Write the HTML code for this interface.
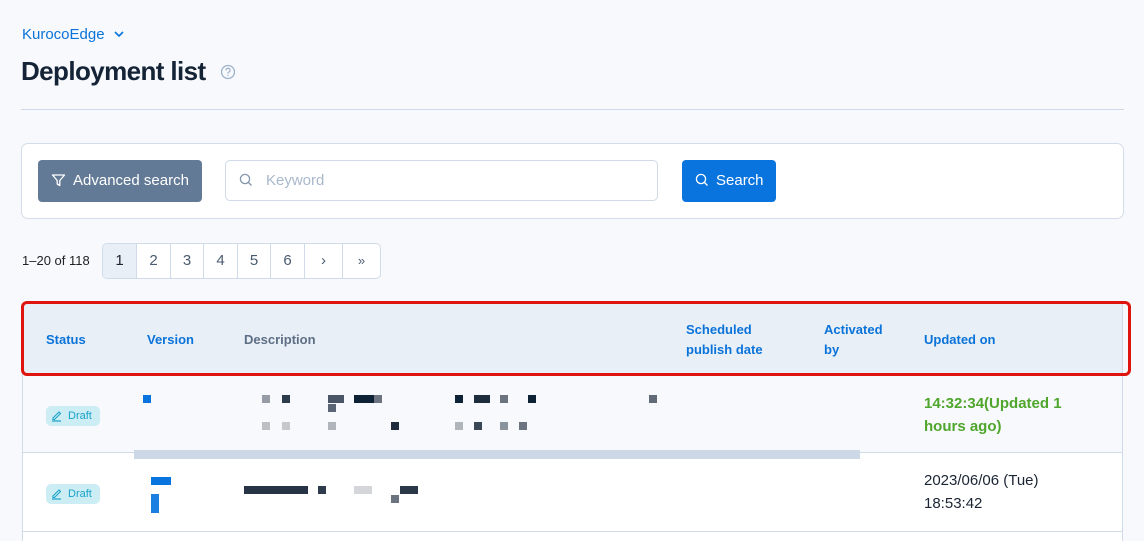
<!DOCTYPE html><html><head><style>
*{box-sizing:border-box;margin:0;padding:0}
body{width:1144px;height:541px;overflow:hidden;background:#f7f9fc;font-family:"Liberation Sans",sans-serif;position:relative;color:#1a2433}
.a{position:absolute}
.px{position:absolute;width:8px;height:8px}
</style></head><body>
<div class="a" style="left:22px;top:26px;font-size:15px;color:#0a73d9">KurocoEdge <svg width="12" height="10" viewBox="0 0 12 10" style="margin-left:4px"><path d="M2 3l4 4 4-4" stroke="#0a73d9" stroke-width="1.6" fill="none"/></svg></div>
<div class="a" style="left:21px;top:56px;font-size:26px;font-weight:bold;color:#142336;letter-spacing:-0.6px">Deployment list</div>
<svg class="a" style="left:220px;top:64px" width="16" height="16" viewBox="0 0 16 16"><circle cx="8" cy="8" r="6.5" fill="none" stroke="#9fb2cb" stroke-width="1.3"/><path d="M6 6.3a2 2 0 1 1 2.6 1.9c-.5.2-.6.5-.6 1v.4" fill="none" stroke="#9fb2cb" stroke-width="1.2"/><circle cx="8" cy="11.3" r=".7" fill="#9fb2cb"/></svg>
<div class="a" style="left:21px;top:109px;width:1103px;height:1px;background:#cdd9e6"></div>
<div class="a" style="left:21px;top:143px;width:1103px;height:76px;background:#fff;border:1px solid #d3dde9;border-radius:7px"></div>
<div class="a" style="left:38px;top:160px;width:164px;height:42px;background:#627a96;border-radius:4px;color:#fff;font-size:15px;line-height:42px;padding-left:35px">Advanced search</div>
<svg class="a" style="left:51px;top:173px" width="15" height="15" viewBox="0 0 15 15"><path d="M1.5 2h12l-4.7 5.5v5l-2.6-1.5v-3.5z" fill="none" stroke="#fff" stroke-width="1.3" stroke-linejoin="round"/></svg>
<div class="a" style="left:225px;top:160px;width:433px;height:41px;background:#fff;border:1px solid #cfdbe8;border-radius:5px;color:#a9b8cb;font-size:15px;line-height:39px;padding-left:40px">Keyword</div>
<svg class="a" style="left:239px;top:173px" width="14" height="14" viewBox="0 0 14 14"><circle cx="6" cy="6" r="4.6" fill="none" stroke="#8597ad" stroke-width="1.3"/><path d="M9.5 9.5l3 3" stroke="#8597ad" stroke-width="1.3"/></svg>
<div class="a" style="left:682px;top:160px;width:94px;height:42px;background:#0a74de;border-radius:4px;color:#fff;font-size:15px;line-height:42px;padding-left:34px">Search</div>
<svg class="a" style="left:695px;top:173px" width="14" height="14" viewBox="0 0 14 14"><circle cx="6" cy="6" r="4.6" fill="none" stroke="#fff" stroke-width="1.3"/><path d="M9.5 9.5l3 3" stroke="#fff" stroke-width="1.3"/></svg>
<div class="a" style="left:22px;top:253px;font-size:13px;color:#222">1–20 of 118</div>
<div class="a" style="left:102px;top:243px;height:36px;display:flex;border:1px solid #cfdbe8;border-radius:5px;background:#fff;overflow:hidden;font-size:15px;color:#4a5b70">
<div style="width:33px;line-height:34px;text-align:center;background:#e9eff7;color:#223">1</div>
<div style="width:34px;line-height:34px;text-align:center;border-left:1px solid #cfdbe8">2</div>
<div style="width:33px;line-height:34px;text-align:center;border-left:1px solid #cfdbe8">3</div>
<div style="width:34px;line-height:34px;text-align:center;border-left:1px solid #cfdbe8">4</div>
<div style="width:33px;line-height:34px;text-align:center;border-left:1px solid #cfdbe8">5</div>
<div style="width:34px;line-height:34px;text-align:center;border-left:1px solid #cfdbe8">6</div>
<div style="width:38px;line-height:34px;text-align:center;border-left:1px solid #cfdbe8">›</div>
<div style="width:38px;line-height:34px;text-align:center;border-left:1px solid #cfdbe8;font-size:13px">»</div>
</div>
<div class="a" style="left:22px;top:304px;width:1101px;height:237px;border-left:1px solid #cfdbe8;border-right:1px solid #cfdbe8;background:#fff"></div>
<div class="a" style="left:23px;top:304px;width:1099px;height:69px;background:#e9eff7"></div>
<div class="a" style="left:23px;top:373px;width:1099px;height:80px;background:#f8f9fc;border-bottom:1px solid #cfdbe8"></div>
<div class="a" style="left:23px;top:531px;width:1099px;height:1px;background:#cfdbe8"></div>
<div class="a" style="font-size:13px;font-weight:bold;color:#0a73d9;left:46px;top:332px">Status</div>
<div class="a" style="font-size:13px;font-weight:bold;color:#0a73d9;left:147px;top:332px">Version</div>
<div class="a" style="font-size:13px;font-weight:bold;color:#5d6f85;left:244px;top:332px">Description</div>
<div class="a" style="font-size:13px;font-weight:bold;color:#0a73d9;left:686px;top:320px;line-height:20px">Scheduled<br>publish date</div>
<div class="a" style="font-size:13px;font-weight:bold;color:#0a73d9;left:824px;top:320px;line-height:20px">Activated<br>by</div>
<div class="a" style="font-size:13px;font-weight:bold;color:#0a73d9;left:924px;top:332px">Updated on</div>
<div class="a" style="left:21px;top:301px;width:1110px;height:75px;border:3px solid #e0140e;border-radius:6px"></div>
<div class="a" style="left:46px;top:406px;width:54px;height:20px;background:#cdedf4;border-radius:5px;color:#18a3c9;font-size:11px;line-height:20px;padding-left:22px">Draft</div>
<div class="a" style="left:46px;top:484px;width:54px;height:20px;background:#cdedf4;border-radius:5px;color:#18a3c9;font-size:11px;line-height:20px;padding-left:22px">Draft</div>
<svg class="a" style="left:51px;top:409px" width="12" height="13" viewBox="0 0 12 13"><path d="M2 9l6-6 1.5 1.5-6 6H2z" fill="none" stroke="#18a3c9" stroke-width="1.1"/><path d="M1 12h9" stroke="#18a3c9" stroke-width="1.2"/></svg>
<svg class="a" style="left:51px;top:487px" width="12" height="13" viewBox="0 0 12 13"><path d="M2 9l6-6 1.5 1.5-6 6H2z" fill="none" stroke="#18a3c9" stroke-width="1.1"/><path d="M1 12h9" stroke="#18a3c9" stroke-width="1.2"/></svg>
<div class="px" style="left:143px;top:395px;width:8px;background:#0a74de"></div>
<div class="px" style="left:262px;top:395px;background:#969ca5"></div><div class="px" style="left:282px;top:395px;background:#2d3b4d"></div>
<div class="px" style="left:328px;top:395px;width:16px;background:#4a5668"></div><div class="px" style="left:354px;top:395px;width:20px;background:#0e2236"></div><div class="px" style="left:374px;top:395px;background:#6b7480"></div>
<div class="px" style="left:455px;top:395px;background:#0e2236"></div><div class="px" style="left:474px;top:395px;width:16px;background:#1e2d3e"></div><div class="px" style="left:500px;top:395px;background:#6b7480"></div><div class="px" style="left:528px;top:395px;background:#0e2236"></div><div class="px" style="left:649px;top:395px;background:#626c79"></div>
<div class="px" style="left:328px;top:404px;background:#5a6676"></div>
<div class="px" style="left:262px;top:422px;background:#bcc0c5"></div><div class="px" style="left:282px;top:422px;background:#c5c8cc"></div><div class="px" style="left:328px;top:422px;background:#b0b5bb"></div><div class="px" style="left:391px;top:422px;background:#1e2d3e"></div><div class="px" style="left:455px;top:422px;background:#b0b5bb"></div><div class="px" style="left:474px;top:422px;background:#3a4656"></div><div class="px" style="left:500px;top:422px;background:#8a929c"></div><div class="px" style="left:519px;top:422px;background:#6b7480"></div>
<div class="a" style="left:134px;top:450px;width:726px;height:9px;background:#ccd8e6"></div>
<div class="px" style="left:151px;top:477px;width:20px;background:#0a74de"></div><div class="px" style="left:151px;top:494px;height:19px;background:#1a7fe0"></div>
<div class="px" style="left:244px;top:486px;width:64px;background:#273446"></div><div class="px" style="left:318px;top:486px;background:#2d3b4d"></div><div class="px" style="left:400px;top:486px;width:18px;background:#2a3848"></div><div class="px" style="left:354px;top:486px;width:18px;background:#d4d6d9"></div><div class="px" style="left:391px;top:495px;background:#6b7480"></div>
<div class="a" style="left:924px;top:392px;font-size:15px;font-weight:bold;color:#4fa62c;line-height:23px">14:32:34(Updated 1<br>hours ago)</div>
<div class="a" style="left:924px;top:469px;font-size:15px;color:#1a2433;line-height:23px">2023/06/06 (Tue)<br>18:53:42</div>
</body></html>
